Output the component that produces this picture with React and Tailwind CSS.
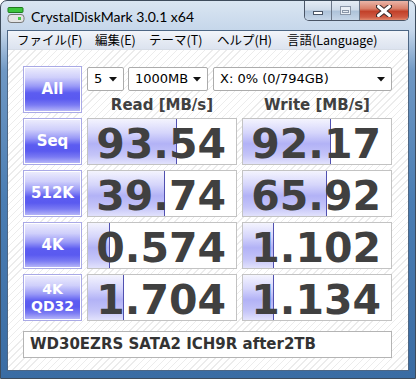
const rows = [
  { label: ['Seq'], read: '93.54', rb: 89, write: '92.17', wb: 88 },
  { label: ['512K'], read: '39.74', rb: 77, write: '65.92', wb: 84 },
  { label: ['4K'], read: '0.574', rb: 22, write: '1.102', wb: 31 },
  { label: ['4K', 'QD32'], read: '1.704', rb: 36, write: '1.134', wb: 31 },
];

const dv = { fontFamily: '"DejaVu Sans", sans-serif' };

function Arrow() {
  return (
    <svg width="8" height="5" viewBox="0 0 8 5" className="shrink-0">
      <path d="M0 0 H8 L4 4.5 Z" fill="#111" />
    </svg>
  );
}

function Combo({ width, text }) {
  return (
    <div
      className="h-[24px] flex items-center justify-between pl-[6px] pr-[6px] bg-white border border-[#acacac] rounded-[2px] text-[13px] text-black"
      style={{ width, ...dv }}
    >
      <span>{text}</span>
      <Arrow />
    </div>
  );
}

function TestButton({ lines, h = 'h-[47px]' }) {
  return (
    <div
      className={`w-[59px] ${h} shrink-0 border border-[#a9a9e6] p-[1px] bg-white`}
    >
      <div className="w-full h-full flex flex-col items-center justify-center bg-[linear-gradient(to_bottom,#ebebfd_0%,#cfcffb_22%,#9a9af7_42%,#5c5cf1_58%,#5a5af0_72%,#7a7af3_86%,#b4b4f8_100%)] text-white font-bold leading-[17px]" style={dv}>
        {lines.map((l) => (
          <span key={l} className={lines.length > 1 ? 'text-[14px]' : 'text-[15px]'}>{l}</span>
        ))}
      </div>
    </div>
  );
}

function Cell({ value, bar }) {
  return (
    <div className="relative w-[150px] h-[47px] bg-white border border-[#c3c3c3]">
      <div
        className="absolute left-0 top-0 bottom-0 bg-[linear-gradient(to_bottom,#f4f4fe_0%,#d6d6fb_30%,#b2b2f6_55%,#c4c4f8_80%,#e2e2fc_100%)] border-r border-[#5050b0]"
        style={{ width: bar }}
      />
      <div
        className="relative h-full flex justify-end pr-[10px] pt-[6px] text-[41px] font-bold text-[#404040] leading-[39px]"
        style={dv}
      >
        {value}
      </div>
    </div>
  );
}

function CaptionButtons() {
  return (
    <div className="absolute top-0 right-[6px] flex h-[20px] border border-t-0 border-[#4a5566] rounded-b-[5px] overflow-hidden">
      <div className="w-[27px] h-full flex items-center justify-center border-r border-[#6a7688] bg-[linear-gradient(to_bottom,#e4ecf5_0%,#cfdbe9_45%,#aec3da_55%,#c6d6e8_100%)]">
        <div className="w-[10px] h-[4px] bg-white border border-[#4a5566] mt-[5px]" />
      </div>
      <div className="w-[28px] h-full flex items-center justify-center border-r border-[#6a7688] bg-[linear-gradient(to_bottom,#e4ecf5_0%,#cfdbe9_45%,#aec3da_55%,#c6d6e8_100%)]">
        <div className="w-[11px] h-[9px] border border-[#8a96a8] bg-[#e8eef5] flex items-center justify-center">
          <div className="w-[7px] h-[3px] border border-[#8a96a8] mt-[1px]" />
        </div>
      </div>
      <div className="w-[48px] h-full flex items-center justify-center bg-[linear-gradient(to_bottom,#eab5a8_0%,#d9806a_40%,#c2412a_55%,#cf5b44_85%,#e08a70_100%)]">
        <svg width="16" height="12" viewBox="0 0 16 12">
          <path d="M2 1 L14 11 M14 1 L2 11" stroke="#3a2a2a" strokeWidth="5" strokeLinecap="round" />
          <path d="M2.5 1.5 L13.5 10.5 M13.5 1.5 L2.5 10.5" stroke="#ffffff" strokeWidth="3" strokeLinecap="round" />
        </svg>
      </div>
    </div>
  );
}

function AppIcon() {
  return (
    <svg width="18" height="17" viewBox="0 0 18 17" className="shrink-0">
      <rect x="1" y="0.5" width="15" height="5" rx="1" fill="#3cc43c" stroke="#1f7a1f" />
      <rect x="1" y="7.5" width="16" height="8" rx="3" fill="#e4e4e4" stroke="#777" />
      <rect x="11" y="10" width="3" height="3" fill="#48c848" />
    </svg>
  );
}

export default function App() {
  const menus = [
    ['ファイル(F)', 'w-[78px]'],
    ['編集(E)', 'w-[54px]'],
    ['テーマ(T)', 'w-[68px]'],
    ['ヘルプ(H)', 'w-[70px]'],
    ['言語(Language)', 'w-[100px]'],
  ];
  return (
    <div className="w-[416px] h-[379px] flex flex-col relative rounded-t-[7px] border border-[#3e4c5c] bg-[linear-gradient(to_bottom,#dae6f2_0px,#c5d6ea_30px,#6f98c4_70px,#4a7db3_200px,#3a6ca3_379px)] overflow-hidden">
      <div className="h-[29px] shrink-0 flex items-center pl-[6px] gap-[6px]">
        <AppIcon />
        <span className="text-[14px] text-black pt-[1px]" style={{ fontFamily: 'Lato, "Liberation Sans", sans-serif' }}>
          CrystalDiskMark 3.0.1 x64
        </span>
      </div>
      <CaptionButtons />
      <div className="flex-1 mx-[6px] mb-[7px] flex flex-col border border-[#4d6684] bg-white">
        <div
          className="h-[19px] shrink-0 flex items-center pl-[9px] text-[12.5px] text-black bg-[linear-gradient(to_bottom,#f3f5fa_0%,#e6ebf4_50%,#dce3ef_100%)] border-b border-[#d6dce6]"
          style={{ fontFamily: '"Noto Sans CJK JP", sans-serif' }}
        >
          {menus.map(([m, w]) => (
            <span key={m} className={w}>{m}</span>
          ))}
        </div>
        <div className="flex-1 pl-[15px] pt-[16px] bg-[repeating-linear-gradient(135deg,#ffffff_0px,#ffffff_4px,#ececec_4px,#ececec_5px)]">
          <div className="flex gap-[5px]">
            <TestButton lines={['All']} />
            <div className="flex flex-col">
              <div className="flex mt-[1px]">
                <Combo width={37} text="5" />
                <div className="w-[4px]" />
                <Combo width={80} text="1000MB" />
                <div className="w-[5px]" />
                <Combo width={179} text="X: 0% (0/794GB)" />
              </div>
              <div className="flex gap-[5px] mt-[3px] h-[19px] text-[15px] font-bold text-[#404040]" style={dv}>
                <div className="w-[150px] text-center">Read [MB/s]</div>
                <div className="w-[150px] text-center">Write [MB/s]</div>
              </div>
            </div>
          </div>
          <div className="flex flex-col gap-[5px] mt-[5px]">
            {rows.map((r) => (
              <div key={r.read} className="flex gap-[5px]">
                <TestButton lines={r.label} />
                <Cell value={r.read} bar={r.rb} />
                <Cell value={r.write} bar={r.wb} />
              </div>
            ))}
          </div>
          <div
            className="mt-[10px] w-[369px] h-[27px] bg-white border border-[#b4b4b4] flex items-center pl-[6px] text-[15px] font-bold text-[#333]"
            style={dv}
          >
            WD30EZRS SATA2 ICH9R after2TB
          </div>
        </div>
      </div>
    </div>
  );
}
